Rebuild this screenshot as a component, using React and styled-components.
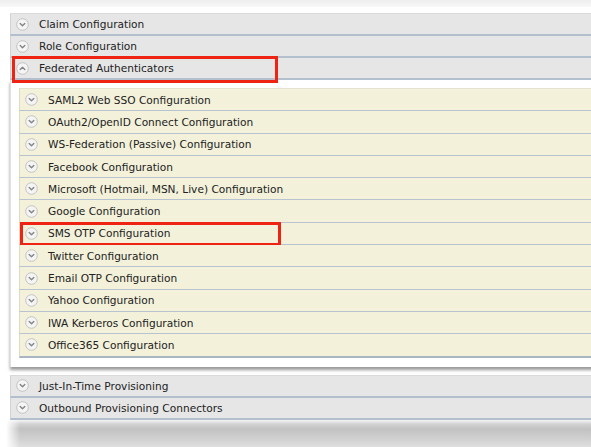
import React from "react";
import styled, { createGlobalStyle } from "styled-components";

const GlobalStyle = createGlobalStyle`
  html, body {
    margin: 0;
    padding: 0;
    background: #fff;
    overflow: hidden;
  }
  body {
    font-family: "DejaVu Sans", Verdana, sans-serif;
    color: #222;
  }
`;

const Screen = styled.div`
  min-height: 447px;
  display: flex;
  flex-direction: column;
`;

const TopFade = styled.div`
  height: 7px;
  background: linear-gradient(#eeeeee, #f8f8f8);
`;

const Page = styled.div`
  flex: 1;
  display: flex;
  flex-direction: column;
  padding: 6px 0 0 10px;
  margin-right: -20px;
`;

const Group = styled.div`
  border-top: 1px solid #dadada;
  margin-top: ${({ $gap }) => $gap || 0}px;
`;

const BottomShade = styled.div`
  flex: 1;
  margin-left: -4px;
  background: linear-gradient(
    #f4f4f4 0px,
    #d2d2d2 4px,
    #c2c2c2 9px,
    #cfcfcf 18px,
    #e2e2e2 29px
  );
  -webkit-mask-image: linear-gradient(90deg, transparent, #000 14px);
  mask-image: linear-gradient(90deg, transparent, #000 14px);
`;

const Header = styled.div`
  position: relative;
  display: flex;
  align-items: center;
  gap: 10px;
  height: 20px;
  padding-left: 5px;
  background: #e6e6e6;
  border-left: 1px solid #d2d2d2;
  border-bottom: 2px solid #b3bfcc;
  font-size: 10.6px;
`;

const Panel = styled.div`
  background: #fff;
  border-left: 1px solid #e2e2e2;
  padding: 8px 0 9px 8px;
  box-shadow: 0 3px 3px rgba(0, 0, 0, 0.4);
`;

const SubRow = styled.div`
  position: relative;
  display: flex;
  align-items: center;
  gap: 10px;
  height: 21.3px;
  padding-left: 5px;
  background: #f3f1da;
  border-left: 1px solid #dedbc4;
  border-bottom: 1px solid #b7c3d0;
  font-size: 10.6px;
  &:first-child {
    border-top: 1px solid #e4e2d0;
  }
  &:last-child {
    border-bottom: 2px solid #a9b5c2;
  }
`;

const Highlight = styled.div`
  position: absolute;
  left: ${({ $left }) => $left}px;
  top: ${({ $top }) => $top}px;
  width: ${({ $width }) => $width}px;
  height: ${({ $height }) => $height}px;
  border: 3px solid #ee2314;
  box-sizing: border-box;
  pointer-events: none;
`;

const Toggle = ({ open }) => (
  <svg width="13" height="13" viewBox="0 0 13 13" style={{ flexShrink: 0 }}>
    <circle cx="6.5" cy="6.5" r="5.8" fill="#f5f5f5" stroke="#c2c2c2" strokeWidth="1" />
    <path
      d={open ? "M4.2 7.6 L6.5 5.3 L8.8 7.6" : "M4.2 5.5 L6.5 7.8 L8.8 5.5"}
      fill="none"
      stroke="#858585"
      strokeWidth="1.4"
      strokeLinecap="round"
      strokeLinejoin="round"
    />
  </svg>
);

const authenticators = [
  "SAML2 Web SSO Configuration",
  "OAuth2/OpenID Connect Configuration",
  "WS-Federation (Passive) Configuration",
  "Facebook Configuration",
  "Microsoft (Hotmail, MSN, Live) Configuration",
  "Google Configuration",
  "SMS OTP Configuration",
  "Twitter Configuration",
  "Email OTP Configuration",
  "Yahoo Configuration",
  "IWA Kerberos Configuration",
  "Office365 Configuration",
];

const App = () => (
  <Screen>
    <GlobalStyle />
    <TopFade />
    <Page>
      <Group>
        <Header>
          <Toggle />
          Claim Configuration
        </Header>
        <Header>
          <Toggle />
          Role Configuration
        </Header>
        <Header>
          <Toggle open />
          Federated Authenticators
          <Highlight $left={1} $top={-2} $width={266} $height={27} />
        </Header>
        <Panel>
          {authenticators.map((name) => (
            <SubRow key={name}>
              <Toggle />
              {name}
              {name === "SMS OTP Configuration" && (
                <Highlight $left={0} $top={-1} $width={261} $height={24} />
              )}
            </SubRow>
          ))}
        </Panel>
      </Group>
      <Group $gap={8}>
        <Header>
          <Toggle />
          Just-In-Time Provisioning
        </Header>
        <Header>
          <Toggle />
          Outbound Provisioning Connectors
        </Header>
      </Group>
      <BottomShade />
    </Page>
  </Screen>
);

export default App;
